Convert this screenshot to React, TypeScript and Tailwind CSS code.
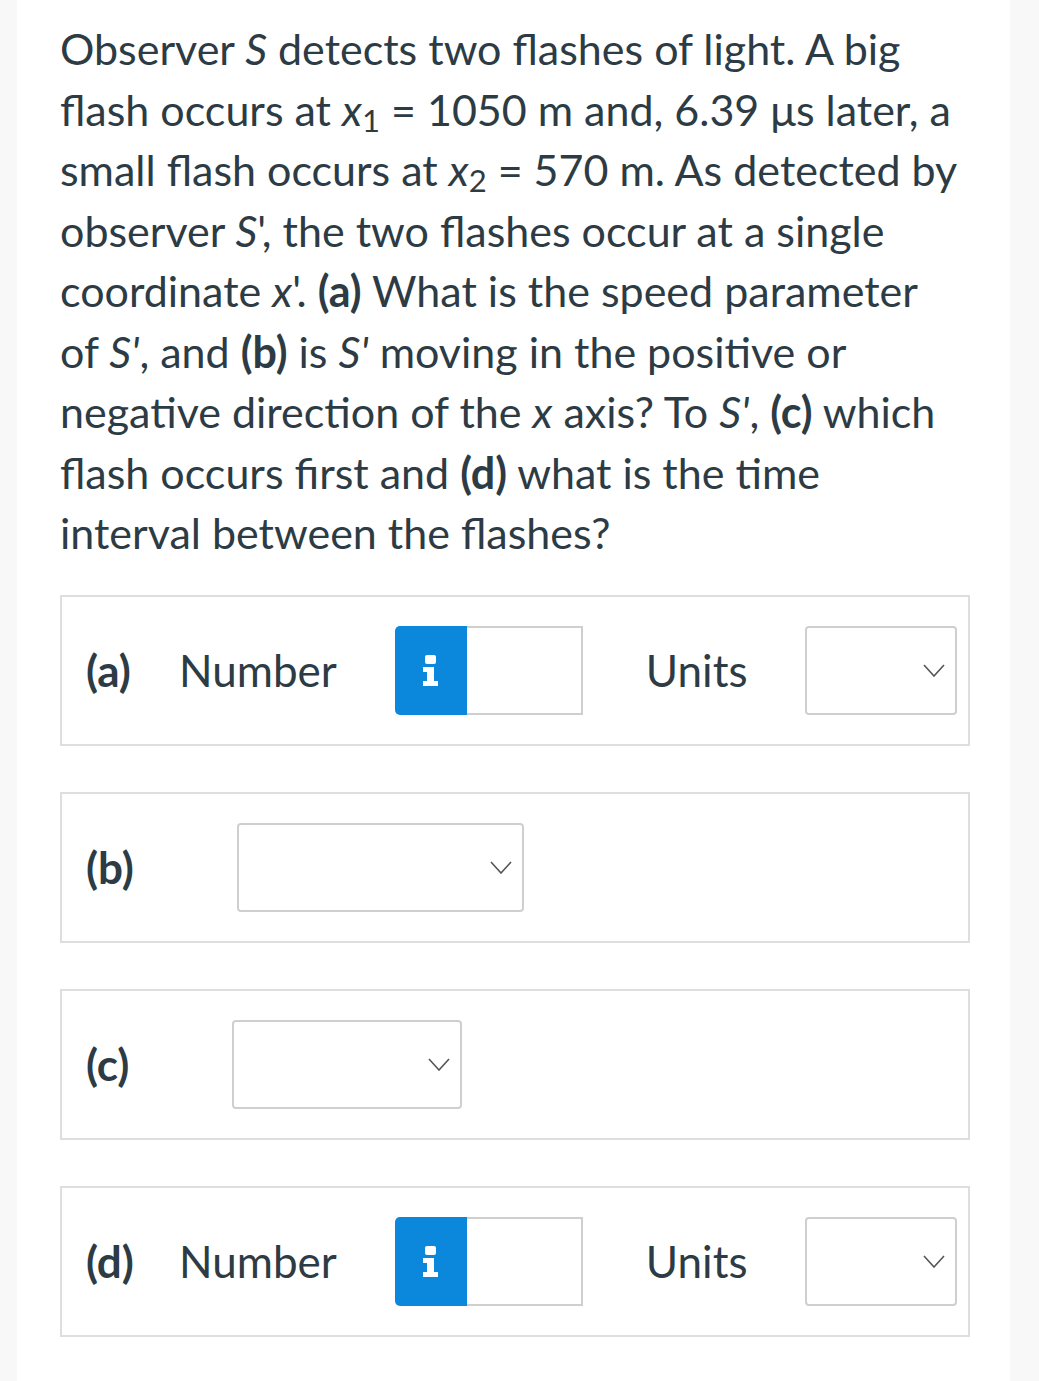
import React from 'react';

const InfoIcon: React.FC = () => (
  <svg width="16" height="31" viewBox="0 0 16 31" fill="white">
    <rect x="2" y="0" width="11" height="9" rx="2" />
    <path d="M0 12h11v14h4v5H0v-5h4v-9H0z" />
  </svg>
);

const Chevron: React.FC = () => (
  <svg width="22" height="13" viewBox="0 0 22 13" fill="none" stroke="#555" strokeWidth="1.6">
    <path d="M1 1l10 11 10-11" />
  </svg>
);

const Select: React.FC<{ width: string }> = ({ width }) => (
  <div className={`${width} h-[89px] border-2 border-[#cfcfcf] rounded-[4px] flex items-center justify-end pr-[10px] bg-white`}>
    <Chevron />
  </div>
);

const NumberRow: React.FC<{ label: string }> = ({ label }) => (
  <div className="h-[151px] border-2 border-[#dedede] flex items-center pl-[24px]">
    <span className="font-bold w-[93px]">{label}</span>
    <span>Number</span>
    <div className="ml-[58px] flex h-[89px]">
      <div className="w-[72px] bg-[#0b88dc] rounded-l-[5px] flex items-center justify-center">
        <InfoIcon />
      </div>
      <div className="w-[116px] border-2 border-l-0 border-[#cfcfcf] bg-white" />
    </div>
    <span className="ml-[63px]">Units</span>
    <div className="ml-[58px]">
      <Select width="w-[152px]" />
    </div>
  </div>
);

const SelectRow: React.FC<{ label: string; width: string; gap: string }> = ({ label, width, gap }) => (
  <div className="h-[151px] border-2 border-[#dedede] flex items-center pl-[24px]">
    <span className={`font-bold ${gap}`}>{label}</span>
    <Select width={width} />
  </div>
);

export default function App() {
  return (
    <div className="min-h-[1381px] bg-[#f8f8f8] flex" style={{ fontFamily: 'Lato, "Open Sans", sans-serif' }}>
      <div className="ml-[17px] w-[993px] bg-white pl-[43px] pr-[40px] pt-[19px] pb-[46px] text-[#2d3b45]">
        <p className="w-[900px] text-[43px] leading-[60.5px]">
          Observer <i>S</i> detects two flashes of light. A big flash occurs at <i>x</i>
          <sub className="text-[31px] relative top-[6px] align-baseline">1</sub> = 1050 m and, 6.39 μs later, a small
          flash occurs at <i>x</i>
          <sub className="text-[31px] relative top-[6px] align-baseline">2</sub> = 570 m. As detected by observer{' '}
          <i>S</i>', the two flashes occur at a single coordinate <i>x</i>'. <b>(a)</b> What is the speed parameter of{' '}
          <i>S'</i>, and <b>(b)</b> is <i>S'</i> moving in the positive or negative direction of the <i>x</i> axis? To{' '}
          <i>S'</i>, <b>(c)</b> which flash occurs first and <b>(d)</b> what is the time interval between the flashes?
        </p>

        <div className="mt-[31px] flex flex-col gap-[46px] text-[44px]">
          <NumberRow label="(a)" />
          <SelectRow label="(b)" width="w-[287px]" gap="mr-[103px]" />
          <SelectRow label="(c)" width="w-[230px]" gap="mr-[103px]" />
          <NumberRow label="(d)" />
        </div>
      </div>
    </div>
  );
}
